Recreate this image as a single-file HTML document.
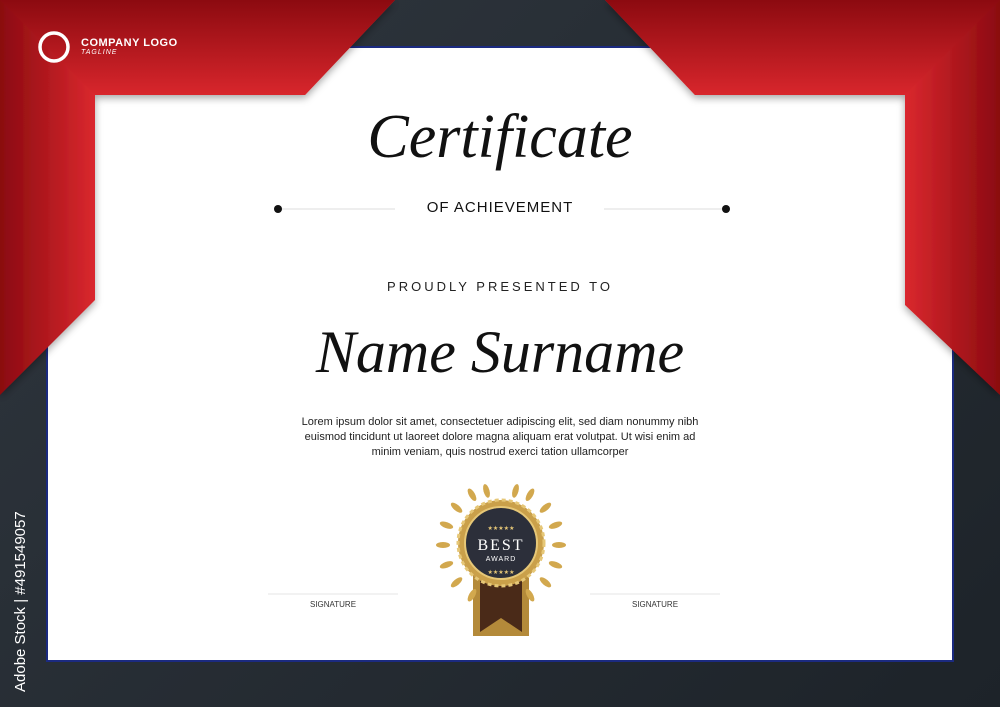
<!DOCTYPE html>
<html><head><meta charset="utf-8"><style>
body{margin:0;width:1000px;height:707px;overflow:hidden;background:#262c33;font-family:"Liberation Sans",sans-serif;position:relative}
.abs{position:absolute}
.c{text-align:center;width:1000px;left:0}
.scr{font-family:"Liberation Serif",serif;font-style:italic;color:#111}
</style></head><body>
<div class="abs" style="left:0;top:0;width:1000px;height:707px;background:linear-gradient(135deg,#2f363e,#1d2329)"></div>
<div class="abs" style="left:46px;top:46px;width:904px;height:612px;background:#fff;border:2px solid #1b2a80"></div>
<svg class="abs" style="left:0;top:0" width="1000" height="707">
<defs>
<linearGradient id="r2" x1="0" y1="0" x2="95" y2="0" gradientUnits="userSpaceOnUse"><stop offset="0" stop-color="#8a0a10"/><stop offset="1" stop-color="#da282e"/></linearGradient>
<linearGradient id="r3" x1="1000" y1="0" x2="905" y2="0" gradientUnits="userSpaceOnUse"><stop offset="0" stop-color="#8a0a10"/><stop offset="1" stop-color="#da282e"/></linearGradient>
<linearGradient id="tv" x1="0" y1="0" x2="0" y2="95" gradientUnits="userSpaceOnUse"><stop offset="0" stop-color="#8c0a10"/><stop offset="1" stop-color="#d8262c"/></linearGradient>
<filter id="sh"><feDropShadow dx="0" dy="3" stdDeviation="4" flood-opacity="0.35"/></filter>
<g id="leaf"><ellipse rx="3" ry="7" fill="#d2a84e"/></g>
</defs>
<g filter="url(#sh)">
<polygon points="0,0 395,0 305,95 95,95 95,300 0,395" fill="url(#r2)"/>
<polygon points="605,0 1000,0 1000,395 905,305 905,95 695,95" fill="url(#r3)"/>
</g>
<polygon points="0,0 395,0 305,95 95,95 0,0" fill="url(#tv)"/>
<polygon points="605,0 1000,0 905,95 695,95" fill="url(#tv)"/>
<circle cx="54" cy="47" r="14" fill="none" stroke="#fff" stroke-width="3.5"/>
<line x1="278" y1="209" x2="395" y2="209" stroke="#ddd"/>
<line x1="604" y1="209" x2="724" y2="209" stroke="#ddd"/>
<circle cx="278" cy="209" r="4" fill="#111"/><circle cx="726" cy="209" r="4" fill="#111"/>
<line x1="268" y1="594" x2="398" y2="594" stroke="#e5e5e5"/>
<line x1="590" y1="594" x2="720" y2="594" stroke="#e5e5e5"/>
<!-- badge -->
<rect x="473" y="560" width="56" height="76" fill="#b48a3a"/>
<polygon points="480,560 522,560 522,632 501,618 480,632" fill="#4a2a18"/>
<g transform="translate(501,545)">
<g transform="rotate(-150) translate(0,-58)"><use href="#leaf"/></g>
<g transform="rotate(-130) translate(0,-58)"><use href="#leaf"/></g>
<g transform="rotate(-110) translate(0,-58)"><use href="#leaf"/></g>
<g transform="rotate(-90) translate(0,-58)"><use href="#leaf"/></g>
<g transform="rotate(-70) translate(0,-58)"><use href="#leaf"/></g>
<g transform="rotate(-50) translate(0,-58)"><use href="#leaf"/></g>
<g transform="rotate(-30) translate(0,-58)"><use href="#leaf"/></g>
<g transform="rotate(-15) translate(0,-56)"><use href="#leaf"/></g>
<g transform="rotate(150) translate(0,-58)"><use href="#leaf"/></g>
<g transform="rotate(130) translate(0,-58)"><use href="#leaf"/></g>
<g transform="rotate(110) translate(0,-58)"><use href="#leaf"/></g>
<g transform="rotate(90) translate(0,-58)"><use href="#leaf"/></g>
<g transform="rotate(70) translate(0,-58)"><use href="#leaf"/></g>
<g transform="rotate(50) translate(0,-58)"><use href="#leaf"/></g>
<g transform="rotate(30) translate(0,-58)"><use href="#leaf"/></g>
<g transform="rotate(15) translate(0,-56)"><use href="#leaf"/></g>
</g>
<circle cx="501" cy="543" r="43" fill="#caa04a" stroke="#e6c777" stroke-width="3" stroke-dasharray="4 3"/>
<circle cx="501" cy="543" r="36" fill="#2c2f3a" stroke="#e6c777" stroke-width="2"/>
<text x="501" y="550" text-anchor="middle" font-family="Liberation Serif,serif" font-size="16" fill="#fff" letter-spacing="2">BEST</text>
<text x="501" y="561" text-anchor="middle" font-size="7" fill="#fff" letter-spacing="1">AWARD</text>
<text x="501" y="530" text-anchor="middle" font-size="6" fill="#e6c777">★★★★★</text>
<text x="501" y="574" text-anchor="middle" font-size="6" fill="#e6c777">★★★★★</text>
</svg>
<div class="abs" style="left:81px;top:37px;color:#fff;font-weight:bold;font-size:11px;letter-spacing:0.5px">COMPANY LOGO</div>
<div class="abs" style="left:81px;top:49px;color:#fff;font-style:italic;font-size:7px;letter-spacing:1px">TAGLINE</div>
<div class="abs c scr" style="top:102px;font-size:62px">Certificate</div>
<div class="abs c" style="top:199px;font-size:15px;letter-spacing:1px;color:#111">OF ACHIEVEMENT</div>
<div class="abs c" style="top:279px;font-size:13px;letter-spacing:3px;color:#222">PROUDLY PRESENTED TO</div>
<div class="abs c scr" style="top:318px;font-size:60px">Name Surname</div>
<div class="abs c" style="top:415px;font-size:11px;line-height:15px;color:#222">Lorem ipsum dolor sit amet, consectetuer adipiscing elit, sed diam nonummy nibh<br>euismod tincidunt ut laoreet dolore magna aliquam erat volutpat. Ut wisi enim ad<br>minim veniam, quis nostrud exerci tation ullamcorper</div>
<div class="abs" style="left:268px;top:600px;width:130px;text-align:center;font-size:8px;color:#333">SIGNATURE</div>
<div class="abs" style="left:590px;top:600px;width:130px;text-align:center;font-size:8px;color:#333">SIGNATURE</div>
<div class="abs" style="left:12px;top:692px;transform:rotate(-90deg);transform-origin:0 0;color:#fff;font-size:15px;white-space:nowrap;width:230px">Adobe Stock | #491549057</div>
</body></html>
